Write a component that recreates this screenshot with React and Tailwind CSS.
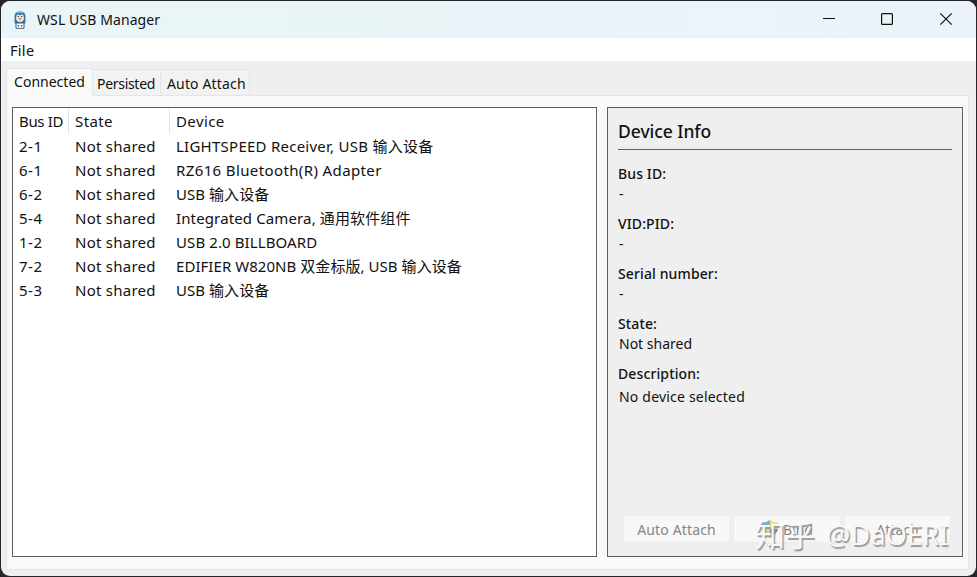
const devices = [
  { busId: '2-1', state: 'Not shared', name: 'LIGHTSPEED Receiver, USB 输入设备', tracking: 'tracking-[0.25px]' },
  { busId: '6-1', state: 'Not shared', name: 'RZ616 Bluetooth(R) Adapter', tracking: 'tracking-[0.38px]' },
  { busId: '6-2', state: 'Not shared', name: 'USB 输入设备', tracking: 'tracking-[0.05px]' },
  { busId: '5-4', state: 'Not shared', name: 'Integrated Camera, 通用软件组件', tracking: 'tracking-[0.13px]' },
  { busId: '1-2', state: 'Not shared', name: 'USB 2.0 BILLBOARD', tracking: 'tracking-[0.1px]' },
  { busId: '7-2', state: 'Not shared', name: 'EDIFIER W820NB 双金标版, USB 输入设备', tracking: 'tracking-[0.05px]' },
  { busId: '5-3', state: 'Not shared', name: 'USB 输入设备', tracking: 'tracking-[0.05px]' },
];

const info = [
  { label: 'Bus ID:', value: '-' },
  { label: 'VID:PID:', value: '-' },
  { label: 'Serial number:', value: '-' },
  { label: 'State:', value: 'Not shared' },
];

function AppIcon() {
  return (
    <svg width="12" height="18" viewBox="0 0 12 18">
      <path d="M0.6 12.500V5Q0.6 0.5 6 0.5T11.400 5V12.500Z" fill="#2d71ad" />
      <path d="M3 1.900Q6 0.800 9 1.900" stroke="#8fc1e2" fill="none" />
      <path d="M2.200 5.800Q2.200 3.600 4 3.600Q5.400 3.600 6 4.600Q6.600 3.600 8 3.600Q9.800 3.600 9.800 5.800V8.500Q9 11 6 11T2.200 8.500Z" fill="#f3efe4" />
      <circle cx="4.300" cy="5.400" r="0.7" fill="#26384a" />
      <circle cx="7.700" cy="5.400" r="0.7" fill="#26384a" />
      <path d="M4 6.800H8L6 9.800Z" fill="#ee8335" />
      <path d="M2 12H10V17.300H2Z" fill="#fff" stroke="#3c5f80" />
      <path d="M3.700 14h1.400v1.500H3.700zM6.900 14h1.400v1.500H6.900z" fill="#3c5365" />
    </svg>
  );
}

function TitleBar() {
  return (
    <header className="flex h-[37px] shrink-0 items-center bg-gradient-to-r from-[#e9f5f7] to-[#ebf3f9] pl-[13px]">
      <AppIcon />
      <span className="ml-[11px] text-[14px] tracking-[0.1px]">WSL USB Manager</span>
      <div className="ml-auto flex items-center">
        <svg width="153" height="37" viewBox="0 0 153 37" fill="none" stroke="#111" strokeWidth="1.2">
          <path d="M0 17.500H12" />
          <rect x="58.600" y="12.600" width="10.800" height="10.800" rx="1" />
          <path d="M117.300 12.300L128.700 23.700M128.700 12.300L117.300 23.700" />
        </svg>
      </div>
    </header>
  );
}

function Tabs() {
  return (
    <nav className="flex h-[34px] shrink-0 items-end pl-[5px] text-[14px]">
      <div className="relative z-10 -mb-px flex h-[28px] w-[87px] justify-center border border-b-0 border-[#e5e5e5] bg-[#f9f9f9] pt-[2px]">
        <span>Connected</span>
      </div>
      <div className="flex h-[26px] w-[68px] border border-l-0 border-b-0 border-[#e5e5e5] bg-[#f2f2f2] pt-[3px] pl-[4px]">
        <span className="tracking-[-0.3px]">Persisted</span>
      </div>
      <div className="flex h-[26px] w-[89px] border border-l-0 border-b-0 border-[#e5e5e5] bg-[#f2f2f2] pt-[3px] pl-[6px]">
        <span className="tracking-[0.15px]">Auto Attach</span>
      </div>
    </nav>
  );
}

function DeviceTable() {
  return (
    <section className="w-[585px] shrink-0 border border-[#5f5f5f] bg-white text-[15px]">
      <div className="flex h-[26px] leading-[27px]">
        <div className="w-[56px] border-r border-[#e5e5e5] pl-[6px] tracking-[-0.35px]">Bus ID</div>
        <div className="w-[101px] border-r border-[#e5e5e5] pl-[6px] tracking-[0.4px]">State</div>
        <div className="pl-[6px] tracking-[0.4px]">Device</div>
      </div>
      {devices.map((device) => (
        <div key={device.busId} className="flex h-[24px] leading-[24px] whitespace-nowrap">
          <div className="w-[56px] pl-[6px] tracking-[0.5px]">{device.busId}</div>
          <div className="w-[101px] pl-[6px] tracking-[0.25px]">{device.state}</div>
          <div className={`pl-[6px] ${device.tracking}`}>{device.name}</div>
        </div>
      ))}
    </section>
  );
}

function Shield() {
  return (
    <svg width="18" height="18" viewBox="0 0 18 18">
      <path d="M9 0Q5 2.500 1 2.500V9H9Z" fill="#6fb5dc" />
      <path d="M9 0Q13 2.500 17 2.500V9H9Z" fill="#f5df78" />
      <path d="M1 9H9V18Q2 14 1 9Z" fill="#f0d568" />
      <path d="M17 9H9V18Q16 14 17 9Z" fill="#4c91c0" />
    </svg>
  );
}

function DeviceInfo() {
  return (
    <section className="relative flex w-[356px] flex-col border border-[#5f5f5f] bg-[#efefef] px-[10px] text-[14px]">
      <h2 className="h-[42px] border-b border-[#5f5f5f] pt-[10px] text-[17.500px] leading-[26px] font-medium tracking-[-0.05px]">
        Device Info
      </h2>
      <dl className="pt-[14px]">
        {info.map((item) => (
          <div key={item.label} className="h-[50px] leading-[20px]">
            <dt className="font-medium tracking-[0.12px]">{item.label}</dt>
            <dd className="pl-px">{item.value}</dd>
          </div>
        ))}
        <dt className="leading-[20px] font-medium tracking-[0.12px]">Description:</dt>
        <dd className="pt-[3px] pl-px leading-[20px] tracking-[0.2px]">No device selected</dd>
      </dl>
      <div className="mt-auto mb-[13px] ml-[5px] flex gap-[3px] text-[#858585]">
        <button className="h-[28px] w-[107px] rounded-[3px] border border-[#ececec] bg-[#f8f8f8] tracking-[0.15px]">Auto Attach</button>
        <button className="flex h-[28px] w-[108px] items-center justify-center gap-[4px] rounded-[3px] border border-[#ececec] bg-[#f8f8f8]">
          <Shield />
          Bind
        </button>
        <button className="h-[28px] w-[107px] rounded-[3px] border border-[#ececec] bg-[#f8f8f8]">Attach</button>
      </div>
      <div className="absolute top-[408px] left-[147px] flex items-center gap-[11px] leading-[38px] whitespace-nowrap text-[#f7f7f7] [text-shadow:1.5px_1.500px_1px_#999]">
        <span className="text-[30px]">知乎</span>
        <span className="text-[27px] tracking-[0.2px]">@DaOERI</span>
      </div>
    </section>
  );
}

export default function App() {
  return (
    <div className="h-[577px] w-[977px] overflow-hidden bg-[#25252b] pt-px pr-[2px] pb-px pl-px font-['Noto_Sans','Noto_Sans_CJK_SC',sans-serif] text-[#111]">
      <div className="flex h-[575px] w-[975px] flex-col overflow-hidden rounded-[9px] bg-[#efefef]">
        <TitleBar />
        <div className="h-[23px] shrink-0 bg-white pl-[9px] text-[14.500px] leading-[25px] tracking-[0.3px]">File</div>
        <Tabs />
        <main className="ml-[5px] flex h-[475px] w-[963px] shrink-0 gap-[10px] border border-[#e5e5e5] bg-[#f9f9f9] pt-[11px] pb-[12px] pl-[5px]">
          <DeviceTable />
          <DeviceInfo />
        </main>
      </div>
    </div>
  );
}
